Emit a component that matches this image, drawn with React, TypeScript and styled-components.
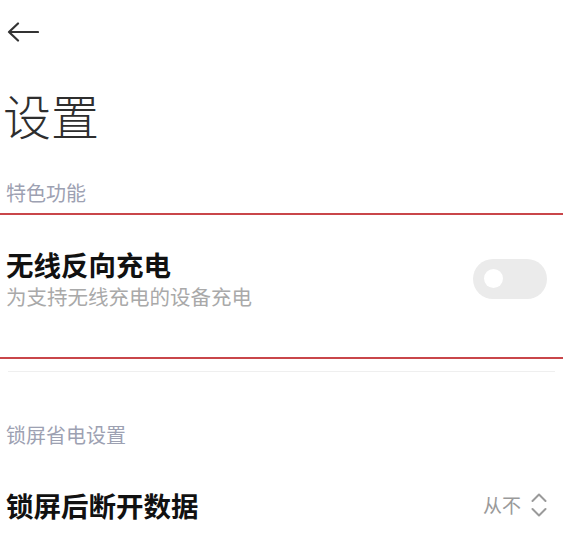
import React from 'react';
import styled, { createGlobalStyle } from 'styled-components';

const GlobalStyle = createGlobalStyle`
    html, body {
        margin: 0;
        padding: 0;
        background: #ffffff;
    }
    body {
        font-family: "Noto Sans CJK SC", "Noto Sans", sans-serif;
        -webkit-font-smoothing: antialiased;
    }
`;

const Page = styled.div`
    width: 563px;
    min-height: 555px;
    background: #ffffff;
    overflow: hidden;
`;

const TopBar = styled.div`
    display: flex;
    align-items: center;
    padding: 22px 0 0 7px;
    height: 20px;
`;

const BackButton = styled.button`
    display: flex;
    padding: 0;
    border: none;
    background: none;
    cursor: pointer;
`;

const Title = styled.h1`
    margin: 48px 0 0 3px;
    font-size: 48px;
    line-height: 48px;
    font-weight: 300;
    color: #2e2e2e;
`;

const SectionLabel = styled.div<{ $top: number }>`
    margin-top: ${(p) => p.$top}px;
    padding-left: 6px;
    font-size: 20px;
    line-height: 20px;
    color: #9da1b2;
`;

const Highlight = styled.div`
    margin-top: 10px;
    border-top: 2px solid #c9464a;
    border-bottom: 2px solid #c9464a;
    padding: 35px 0 50px;
`;

const Row = styled.div<{ $top?: number }>`
    display: flex;
    align-items: center;
    justify-content: space-between;
    margin-top: ${(p) => p.$top ?? 0}px;
    padding: 0 16px 0 6px;
`;

const TextCol = styled.div`
    display: flex;
    flex-direction: column;
    gap: 8px;
`;

const RowTitle = styled.div`
    font-size: 27.5px;
    line-height: 28px;
    font-weight: 700;
    color: #111111;
`;

const RowDesc = styled.div`
    font-size: 20.5px;
    line-height: 21px;
    color: #a9a9a9;
`;

const Toggle = styled.button<{ $on: boolean }>`
    position: relative;
    width: 74px;
    height: 40px;
    padding: 0;
    border: none;
    border-radius: 20px;
    background: ${(p) => (p.$on ? '#2f7bf5' : '#ebebeb')};
    cursor: pointer;

    &::after {
        content: '';
        position: absolute;
        top: 10.5px;
        left: ${(p) => (p.$on ? '44px' : '10.5px')};
        width: 19px;
        height: 19px;
        border-radius: 50%;
        background: #ffffff;
    }
`;

const Divider = styled.div`
    margin: 12px 8px 0 8px;
    height: 1px;
    background: #efefef;
`;

const Value = styled.div`
    display: flex;
    align-items: center;
    gap: 10px;
    font-size: 19px;
    line-height: 20px;
    color: #9a9a9a;
`;

const ArrowLeft = () => (
    <svg width="32" height="20" viewBox="0 0 32 20" fill="none">
        <path d="M31 10H2M11 1.5L2 10l9 8.5" stroke="#333" strokeWidth="2.2" strokeLinecap="round" strokeLinejoin="round" />
    </svg>
);

const UpDown = () => (
    <svg width="16" height="26" viewBox="0 0 16 26" fill="none">
        <path d="M1.5 9L8 2.5 14.5 9M1.5 17L8 23.5 14.5 17" stroke="#9a9a9a" strokeWidth="2" strokeLinecap="round" strokeLinejoin="round" />
    </svg>
);

const App: React.FC = () => {
    const [reverseCharge, setReverseCharge] = React.useState(false);

    return (
        <Page>
            <GlobalStyle />
            <TopBar>
                <BackButton aria-label="返回">
                    <ArrowLeft />
                </BackButton>
            </TopBar>
            <Title>设置</Title>

            <SectionLabel $top={45}>特色功能</SectionLabel>
            <Highlight>
                <Row>
                    <TextCol>
                        <RowTitle>无线反向充电</RowTitle>
                        <RowDesc>为支持无线充电的设备充电</RowDesc>
                    </TextCol>
                    <Toggle $on={reverseCharge} onClick={() => setReverseCharge(!reverseCharge)} />
                </Row>
            </Highlight>
            <Divider />

            <SectionLabel $top={53}>锁屏省电设置</SectionLabel>
            <Row $top={46}>
                <RowTitle>锁屏后断开数据</RowTitle>
                <Value>
                    从不
                    <UpDown />
                </Value>
            </Row>
        </Page>
    );
};

export default App;
